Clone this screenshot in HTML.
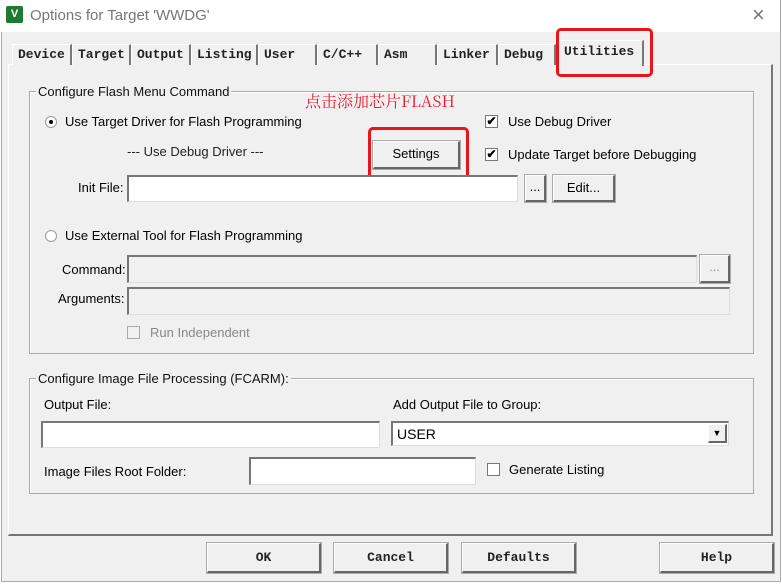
<!DOCTYPE html>
<html><head><meta charset="utf-8"><style>
*{box-sizing:border-box;margin:0;padding:0}
body{width:782px;height:588px;background:#fff;position:relative;overflow:hidden;font-family:"Liberation Sans",sans-serif;font-size:13px;color:#000}
.a{position:absolute}
.win{left:1px;top:0;width:780px;height:582px;background:#f0f0f0;border:1px solid #aaa}
.title{left:0;top:0;width:780px;height:32px;background:#fff}
.tab{position:absolute;top:44px;height:21px;background:#f0f0f0;border-left:1px solid #fff;border-top:1px solid #fff;border-right:2px solid #777;font-family:"Liberation Mono",monospace;font-weight:bold;font-size:13px;padding:2px 0 0 5px;color:#222}
.panel{left:8px;top:64px;width:765px;height:472px;border:1px solid #fff;border-right:2px solid #777;border-bottom:2px solid #777}
.grp{border:1px solid #aaa;box-shadow:1px 1px 0 #fff inset}
.leg{background:#f0f0f0;padding:0 2px;color:#111}
.inp{background:#fff;border:1px solid #888;border-top:2px solid #777;border-left:2px solid #777;border-right-color:#ddd;border-bottom-color:#ddd}
.dis{background:#f0f0f0}
.btn{background:#f0f0f0;border:1px solid #fff;border-right:2px solid #666;border-bottom:2px solid #666;text-align:center;line-height:24px;box-shadow:0 0 0 1px #aaa}
.mono{font-family:"Liberation Mono",monospace;font-size:13px;font-weight:bold;color:#222}
.cb{width:13px;height:13px;border:1px solid #777;background:#fff;font-size:12px;line-height:11px;text-align:center;font-weight:bold}
.rad{width:12px;height:12px;border-radius:50%;border:1px solid #999;background:#fff}
.red{border:3px solid #e8141c;border-radius:5px}
</style></head><body>
<div class="a win"></div>
<div class="a title"></div>
<div class="a" style="left:6px;top:6px;width:17px;height:17px;background:#1e7a2e;border-radius:2px;color:#fff;font-size:11px;font-weight:bold;text-align:center;line-height:17px">V</div>
<div class="a" style="left:30px;top:7px;font-size:15px;color:#777">Options for Target 'WWDG'</div>
<div class="a" style="left:752px;top:2px;font-size:22px;color:#777">×</div>

<div class="a panel"></div>
<div class="tab" style="left:12px;width:60px">Device</div>
<div class="tab" style="left:72px;width:59px">Target</div>
<div class="tab" style="left:131px;width:60px">Output</div>
<div class="tab" style="left:191px;width:67px">Listing</div>
<div class="tab" style="left:258px;width:59px">User</div>
<div class="tab" style="left:317px;width:61px">C/C++</div>
<div class="tab" style="left:378px;width:59px">Asm</div>
<div class="tab" style="left:437px;width:61px">Linker</div>
<div class="tab" style="left:498px;width:58px">Debug</div>
<div class="tab" style="left:558px;top:40px;height:26px;width:86px;border-bottom:none;padding-top:3px">Utilities</div>
<div class="a red" style="left:556px;top:28px;width:97px;height:49px"></div>

<div class="a grp" style="left:29px;top:91px;width:725px;height:263px"></div>
<div class="a leg" style="left:36px;top:84px">Configure Flash Menu Command</div>
<div class="a" style="left:305px;top:89px;color:#f0142c;font-family:'Noto Serif CJK SC',serif;font-size:16px;text-shadow:0 0 2px #fff">点击添加芯片FLASH</div>
<div class="a rad" style="left:45px;top:116px"><div style="width:4px;height:4px;background:#000;border-radius:50%;margin:3px"></div></div>
<div class="a" style="left:65px;top:114px">Use Target Driver for Flash Programming</div>
<div class="a" style="left:127px;top:144px;color:#222">--- Use Debug Driver ---</div>
<div class="a btn" style="left:373px;top:141px;width:87px;height:28px">Settings</div>
<div class="a red" style="left:368px;top:127px;width:101px;height:53px"></div>
<div class="a cb" style="left:485px;top:115px">✔</div>
<div class="a" style="left:508px;top:114px">Use Debug Driver</div>
<div class="a cb" style="left:485px;top:148px">✔</div>
<div class="a" style="left:508px;top:147px">Update Target before Debugging</div>
<div class="a" style="left:78px;top:180px">Init File:</div>
<div class="a inp" style="left:127px;top:175px;width:391px;height:27px"></div>
<div class="a btn" style="left:525px;top:175px;width:21px;height:27px;line-height:22px">...</div>
<div class="a btn" style="left:553px;top:175px;width:62px;height:27px">Edit...</div>
<div class="a rad" style="left:45px;top:230px"></div>
<div class="a" style="left:65px;top:228px">Use External Tool for Flash Programming</div>
<div class="a" style="left:62px;top:262px">Command:</div>
<div class="a inp dis" style="left:127px;top:255px;width:570px;height:28px"></div>
<div class="a btn" style="left:700px;top:255px;width:30px;height:28px;line-height:22px;color:#999">...</div>
<div class="a" style="left:58px;top:291px">Arguments:</div>
<div class="a inp dis" style="left:127px;top:287px;width:603px;height:28px"></div>
<div class="a cb" style="left:127px;top:326px;background:#f0f0f0;border-color:#aaa"></div>
<div class="a" style="left:150px;top:325px;color:#888">Run Independent</div>

<div class="a grp" style="left:29px;top:378px;width:725px;height:116px"></div>
<div class="a leg" style="left:36px;top:371px">Configure Image File Processing (FCARM):</div>
<div class="a" style="left:44px;top:397px">Output File:</div>
<div class="a" style="left:393px;top:397px">Add Output File  to Group:</div>
<div class="a inp" style="left:41px;top:421px;width:339px;height:27px"></div>
<div class="a inp" style="left:391px;top:421px;width:338px;height:25px;padding:3px 4px;font-size:14px">USER</div>
<div class="a btn" style="left:708px;top:424px;width:19px;height:19px;font-size:9px;line-height:17px;box-shadow:none">▼</div>
<div class="a" style="left:44px;top:464px">Image Files Root Folder:</div>
<div class="a inp" style="left:249px;top:457px;width:227px;height:28px"></div>
<div class="a cb" style="left:487px;top:463px"></div>
<div class="a" style="left:509px;top:462px">Generate Listing</div>

<div class="a btn mono" style="left:207px;top:543px;width:114px;height:30px;line-height:27px">OK</div>
<div class="a btn mono" style="left:334px;top:543px;width:114px;height:30px;line-height:27px">Cancel</div>
<div class="a btn mono" style="left:462px;top:543px;width:114px;height:30px;line-height:27px">Defaults</div>
<div class="a btn mono" style="left:660px;top:543px;width:114px;height:30px;line-height:27px">Help</div>
</body></html>
